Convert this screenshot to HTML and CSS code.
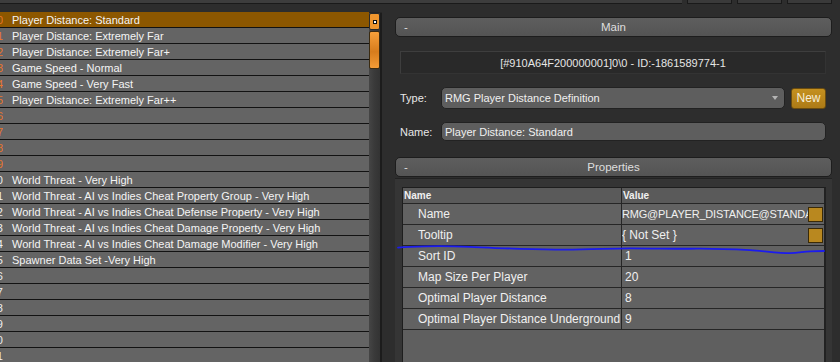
FILE: index.html
```html
<!DOCTYPE html>
<html>
<head>
<meta charset="utf-8">
<title>Editor</title>
<link rel="stylesheet" href="styles.css">
</head>
<body>
<div class="topbar">
  <div class="tb-main"></div>
  <div class="tb-btn"></div>
  <div class="tb-btn"></div>
  <div class="tb-btn"></div>
</div>
<div class="workspace">
  <div class="listpane">
    <div class="list">
      <div class="row sel"><span class="num o"><span>0</span></span><span class="txt">Player Distance: Standard</span></div>
      <div class="row"><span class="num o"><span>1</span></span><span class="txt">Player Distance: Extremely Far</span></div>
      <div class="row"><span class="num o"><span>2</span></span><span class="txt">Player Distance: Extremely Far+</span></div>
      <div class="row"><span class="num o"><span>3</span></span><span class="txt">Game Speed - Normal</span></div>
      <div class="row"><span class="num o"><span>4</span></span><span class="txt">Game Speed - Very Fast</span></div>
      <div class="row"><span class="num o"><span>5</span></span><span class="txt">Player Distance: Extremely Far++</span></div>
      <div class="row"><span class="num o"><span>6</span></span><span class="txt"></span></div>
      <div class="row"><span class="num o"><span>7</span></span><span class="txt"></span></div>
      <div class="row"><span class="num o"><span>8</span></span><span class="txt"></span></div>
      <div class="row"><span class="num o"><span>9</span></span><span class="txt"></span></div>
      <div class="row"><span class="num"><span>10</span></span><span class="txt">World Threat - Very High</span></div>
      <div class="row"><span class="num"><span>11</span></span><span class="txt">World Threat - AI vs Indies Cheat Property Group - Very High</span></div>
      <div class="row"><span class="num"><span>12</span></span><span class="txt">World Threat - AI vs Indies Cheat Defense Property - Very High</span></div>
      <div class="row"><span class="num"><span>13</span></span><span class="txt">World Threat - AI vs Indies Cheat Damage Property - Very High</span></div>
      <div class="row"><span class="num"><span>14</span></span><span class="txt">World Threat - AI vs Indies Cheat Damage Modifier - Very High</span></div>
      <div class="row"><span class="num"><span>15</span></span><span class="txt">Spawner Data Set -Very High</span></div>
      <div class="row"><span class="num"><span>16</span></span><span class="txt"></span></div>
      <div class="row"><span class="num"><span>17</span></span><span class="txt"></span></div>
      <div class="row"><span class="num"><span>18</span></span><span class="txt"></span></div>
      <div class="row"><span class="num"><span>19</span></span><span class="txt"></span></div>
      <div class="row"><span class="num"><span>20</span></span><span class="txt"></span></div>
      <div class="row"><span class="num"><span>21</span></span><span class="txt"></span></div>
    </div>
    <div class="vscroll">
      <div class="sb-btn"><span class="sb-dot"></span></div>
      <div class="sb-thumb"></div>
    </div>
  </div>
  <div class="editor">
    <div class="group-head"><span class="minus">-</span><span class="gtitle">Main</span><span></span></div>
    <div class="idbox">[#910A64F200000001]0\0 - ID:-1861589774-1</div>
    <div class="field-row">
      <span class="flabel">Type:</span>
      <div class="combo"><span>RMG Player Distance Definition</span><span class="arrow"></span></div>
      <button class="new">New</button>
    </div>
    <div class="field-row name-row">
      <span class="flabel">Name:</span>
      <div class="input">Player Distance: Standard</div>
    </div>
    <div class="group-head props-head"><span class="minus">-</span><span class="gtitle">Properties</span><span></span></div>
    <div class="propbox">
      <div class="grid">
        <div class="prow ghead"><div class="cname">Name</div><div class="cval">Value</div></div>
        <div class="prow"><div class="cname">Name</div><div class="cval edit"><span class="vtext caps">RMG@PLAYER_DISTANCE@STANDARD</span><span class="gold"></span></div></div>
        <div class="prow"><div class="cname">Tooltip</div><div class="cval edit"><span class="vtext">{ Not Set }</span><span class="gold"></span></div></div>
        <div class="prow"><div class="cname">Sort ID</div><div class="cval">1</div></div>
        <div class="prow"><div class="cname">Map Size Per Player</div><div class="cval">20</div></div>
        <div class="prow"><div class="cname">Optimal Player Distance</div><div class="cval">8</div></div>
        <div class="prow"><div class="cname">Optimal Player Distance Underground</div><div class="cval">9</div></div>
      </div>
    </div>
  </div>
</div>
<svg class="ink" width="840" height="362" viewBox="0 0 840 362">
  <path d="M398 247.6 C405 247 412 246.6 425 246.3 C440 246 455 246.2 470 246.9 C485 247.6 495 248.2 505 248.4 C520 248.7 540 249.5 565 249.6 C590 249.6 610 248.4 630 248.3 C655 248.3 675 248.9 697 248.7 C715 248.6 735 249.4 750 250.2 C765 251.2 778 253 790 253.2 C798 253.2 803 251.6 810 251.3 C815 251.1 820 251 824 251" fill="none" stroke="#1b1bee" stroke-width="1.8" stroke-linecap="round"/>
</svg>
</body>
</html>
```
FILE: styles.css
```css
* { box-sizing: border-box; }
html, body { margin: 0; padding: 0; }
body {
  width: 840px;
  height: 362px;
  overflow: hidden;
  background: #2d2d2d;
  font-family: "Liberation Sans", Arial, sans-serif;
  font-size: 11px;
  color: #ececec;
  position: relative;
}
.topbar { height: 4px; display: flex; gap: 5px; padding-right: 8px; }
.tb-main { flex: 1; background: #3d3d3d; border-bottom: 1px solid #1a1a1a; }
.tb-btn { width: 45px; background: #3a3a3a; border: 1px solid #1a1a1a; border-top: 0; }

.workspace { display: flex; height: 358px; }
.listpane { display: flex; padding-top: 8px; width: 382px; flex: none; }
.list { width: 369px; flex: none; }
.row {
  height: 16px;
  display: flex;
  align-items: center;
  background: #646464;
  border-bottom: 1px solid #121212;
  white-space: nowrap;
  overflow: hidden;
}
.row.sel { background: #8c5700; }
.num { width: 3px; flex: none; display: flex; justify-content: flex-end; overflow: hidden; color: #f0f0f0; }
.num.o { color: #e8762c; }
.txt { margin-left: 9px; color: #f4f4f4; }

.vscroll {
  width: 13px;
  flex: none;
  background: linear-gradient(to right, #454545, #3a3a3a 40%, #333 85%, #1c1c1c 85%);
  border-top: 1px solid #262626;
  display: flex;
  flex-direction: column;
  padding-right: 2px;
}
.sb-btn {
  height: 17px;
  background: #f0962e;
  border: 1px solid #2a2a2a;
  border-radius: 2px;
  display: flex;
  align-items: center;
  justify-content: center;
}
.sb-dot { width: 4px; height: 4px; background: #fff; border: 1px solid #111; }
.sb-thumb {
  margin-top: 1px;
  height: 38px;
  background: linear-gradient(#f7a03a, #d67c1c 55%, #f49c36);
  border: 1px solid #3a2a10;
  border-radius: 2px;
}

.editor { flex: 1; padding: 13px 8px 0 13px; display: flex; flex-direction: column; }
.group-head {
  height: 20px;
  flex: none;
  border: 1px solid #1d1d1d;
  border-radius: 5px;
  background: linear-gradient(#5e5e5e, #545454);
  display: grid;
  grid-template-columns: 1fr auto 1fr;
  align-items: center;
  color: #dedede;
  font-size: 11.5px;
}
.minus { padding-left: 8px; }
.idbox {
  margin: 14px 6px 0 5px;
  height: 23px;
  flex: none;
  background: #292929;
  border: 1px solid #3e3e3e;
  border-right-color: #333;
  border-bottom-color: #333;
  display: flex;
  align-items: center;
  justify-content: center;
  color: #e6e6e6;
}
.field-row { display: flex; align-items: center; margin: 13px 6px 0 5px; flex: none; }
.flabel { width: 41px; flex: none; color: #e8e8e8; }
.combo {
  width: 344px;
  height: 22px;
  border: 1px solid #222;
  border-radius: 5px;
  background: #5e5e5e;
  display: flex;
  align-items: center;
  padding-left: 3px;
  color: #f0f0f0;
}
.arrow {
  margin-left: auto;
  margin-right: 6px;
  width: 0;
  height: 0;
  border-left: 3px solid transparent;
  border-right: 3px solid transparent;
  border-top: 4px solid #b4b4b4;
}
.new {
  margin-left: 6px;
  width: 35px;
  height: 21px;
  padding: 0;
  border: 1px solid #6a4c10;
  border-radius: 3px;
  background: linear-gradient(#c4901f, #ad7b17);
  color: #f8eed8;
  font-family: "Liberation Sans", Arial, sans-serif;
  font-size: 12px;
}
.name-row { margin-top: 13px; }
.input {
  flex: 1;
  height: 19px;
  border: 1px solid #222;
  border-radius: 5px;
  background: #5e5e5e;
  display: flex;
  align-items: center;
  padding-left: 3px;
  color: #f0f0f0;
}
.props-head { margin-top: 16px; }
.propbox {
  flex: 1;
  margin-top: 1px;
  background: #353535;
  border-top: 1px solid #222;
  padding: 8px 6px 0 7px;
}
.grid {
  height: 100%;
  background: #5f5f5f;
  border: 1px solid #1e1e1e;
  border-right: 2px solid #222;
  border-bottom: 0;
}
.prow {
  display: grid;
  grid-template-columns: 219px 1fr;
  height: 21px;
  border-bottom: 1px solid #262626;
  background: #626262;
  font-size: 12px;
  color: #f0f0f0;
}
.prow > div { display: flex; align-items: center; white-space: nowrap; overflow: hidden; }
.cname { padding-left: 15px; border-right: 1px solid #262626; }
.cval { padding-left: 3px; }
.cval.edit { padding-left: 0; }
.vtext { flex: 1; overflow: hidden; white-space: nowrap; }
.vtext.caps { font-size: 11px; letter-spacing: -0.2px; }
.gold {
  width: 15px;
  height: 15px;
  flex: none;
  margin-right: 1px;
  background: #b9881f;
  border: 1px solid #3a2a08;
}
.ghead { height: 16px; background: #5a5a5a; font-size: 10px; font-weight: bold; }
.ghead .cname { padding-left: 1px; }
.ghead .cval { padding-left: 1px; }
.ink { position: absolute; left: 0; top: 0; pointer-events: none; }
```
